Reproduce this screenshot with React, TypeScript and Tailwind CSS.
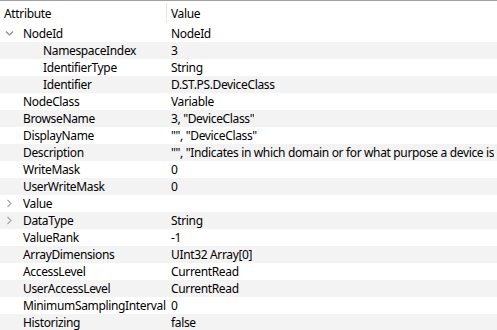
import React from 'react';

type Row = {
  name: string;
  value: string;
  level: number;
  expander?: 'open' | 'closed';
};

const rows: Row[] = [
  { name: 'NodeId', value: 'NodeId', level: 0, expander: 'open' },
  { name: 'NamespaceIndex', value: '3', level: 1 },
  { name: 'IdentifierType', value: 'String', level: 1 },
  { name: 'Identifier', value: 'D.ST.PS.DeviceClass', level: 1 },
  { name: 'NodeClass', value: 'Variable', level: 0 },
  { name: 'BrowseName', value: '3, "DeviceClass"', level: 0 },
  { name: 'DisplayName', value: '"", "DeviceClass"', level: 0 },
  {
    name: 'Description',
    value: '"", "Indicates in which domain or for what purpose a device is',
    level: 0,
  },
  { name: 'WriteMask', value: '0', level: 0 },
  { name: 'UserWriteMask', value: '0', level: 0 },
  { name: 'Value', value: '', level: 0, expander: 'closed' },
  { name: 'DataType', value: 'String', level: 0, expander: 'closed' },
  { name: 'ValueRank', value: '-1', level: 0 },
  { name: 'ArrayDimensions', value: 'UInt32 Array[0]', level: 0 },
  { name: 'AccessLevel', value: 'CurrentRead', level: 0 },
  { name: 'UserAccessLevel', value: 'CurrentRead', level: 0 },
  { name: 'MinimumSamplingInterval', value: '0', level: 0 },
  { name: 'Historizing', value: 'false', level: 0 },
];

function Chevron({ open }: { open: boolean }) {
  return (
    <svg width="9" height="9" viewBox="0 0 9 9" className="shrink-0">
      {open ? (
        <polyline points="1,2.5 4.5,6 8,2.5" fill="none" stroke="#8a8a8a" strokeWidth="1.2" />
      ) : (
        <polyline points="2.5,1 6,4.5 2.5,8" fill="none" stroke="#a6a6a6" strokeWidth="1.2" />
      )}
    </svg>
  );
}

export default function App() {
  return (
    <div
      className="w-[497px] h-[330px] overflow-hidden bg-white text-[12px] tracking-[-0.35px] text-black"
      style={{ fontFamily: '"Noto Sans", "Open Sans", sans-serif' }}
    >
      {/* header */}
      <div className="flex h-[25px] border-t border-[#a0a0a0] bg-white">
        <div className="w-[167px] pl-[4px] pt-[1px] flex items-center border-r border-[#e5e5e5] my-[2px]">
          Attribute
        </div>
        <div className="pl-[4px] pt-[1px] flex items-center">Value</div>
      </div>

      {/* rows */}
      {rows.map((r, i) => (
        <div
          key={r.name}
          className={`flex h-[17px] items-center whitespace-nowrap ${i % 2 === 1 ? 'bg-[#f3f3f3]' : 'bg-white'}`}
        >
          <div className="w-[167px] shrink-0 flex items-center overflow-hidden">
            <div className="w-[23px] shrink-0 flex items-center pl-[5px]">
              {r.expander && <Chevron open={r.expander === 'open'} />}
            </div>
            {r.level === 1 && <div className="w-[20px] shrink-0" />}
            <span className="leading-[17px]">{r.name}</span>
          </div>
          <div className="pl-[4px] overflow-hidden leading-[17px]">{r.value}</div>
        </div>
      ))}
    </div>
  );
}
